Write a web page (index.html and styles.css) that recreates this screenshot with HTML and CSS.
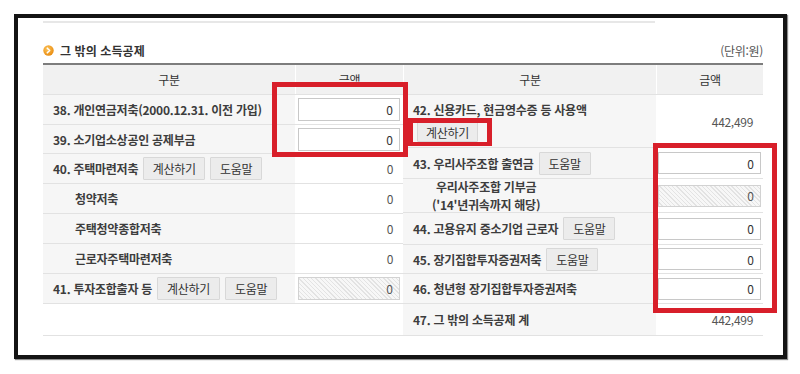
FILE: index.html
```html
<!DOCTYPE html>
<html lang="ko">
<head>
<meta charset="utf-8">
<title>그 밖의 소득공제</title>
<link rel="stylesheet" href="styles.css">
</head>
<body>
<div class="page">
  <div class="frame">
    <div class="prev-line"></div>
    <div class="title-row">
      <h3 class="title">
        <svg class="bullet" width="11" height="11" viewBox="0 0 11 11" aria-hidden="true">
          <defs>
            <radialGradient id="bg" cx="40%" cy="35%" r="70%">
              <stop offset="0" stop-color="#fcc45a"/>
              <stop offset="1" stop-color="#e8890c"/>
            </radialGradient>
          </defs>
          <circle cx="5.5" cy="5.5" r="5.2" fill="url(#bg)"/>
          <path d="M4.3 3.2 L6.6 5.5 L4.3 7.8" fill="none" stroke="#fff" stroke-width="1.6" stroke-linecap="round" stroke-linejoin="round"/>
        </svg>
        <span>그 밖의 소득공제</span>
      </h3>
      <span class="unit">(단위:원)</span>
    </div>

    <div class="tables">
      <div class="tbl tbl-left">
        <div class="row head h30">
          <div class="c lbl">구분</div>
          <div class="c amt">금액</div>
        </div>
        <div class="row h30">
          <div class="c lbl"><span>38. 개인연금저축(2000.12.31. 이전 가입)</span></div>
          <div class="c amt in"><input class="inp" type="text" value="0"></div>
        </div>
        <div class="row h29">
          <div class="c lbl"><span>39. 소기업소상공인 공제부금</span></div>
          <div class="c amt in"><input class="inp" type="text" value="0"></div>
        </div>
        <div class="row h30">
          <div class="c lbl"><span>40. 주택마련저축</span><button class="btn w62">계산하기</button><button class="btn w52">도움말</button></div>
          <div class="c amt">0</div>
        </div>
        <div class="row h30">
          <div class="c lbl sub"><span>청약저축</span></div>
          <div class="c amt">0</div>
        </div>
        <div class="row h30">
          <div class="c lbl sub"><span>주택청약종합저축</span></div>
          <div class="c amt">0</div>
        </div>
        <div class="row h30">
          <div class="c lbl sub"><span>근로자주택마련저축</span></div>
          <div class="c amt">0</div>
        </div>
        <div class="row h30">
          <div class="c lbl"><span>41. 투자조합출자 등</span><button class="btn w63">계산하기</button><button class="btn w52">도움말</button></div>
          <div class="c amt in"><input class="inp dis" type="text" value="0" disabled></div>
        </div>
      </div>

      <div class="tbl tbl-right">
        <div class="row head h30">
          <div class="c lbl">구분</div>
          <div class="c amt">금액</div>
        </div>
        <div class="row h53">
          <div class="c lbl stack"><span>42. 신용카드, 현금영수증 등 사용액</span><button class="btn small">계산하기</button></div>
          <div class="c amt">442,499</div>
        </div>
        <div class="row h31">
          <div class="c lbl"><span>43. 우리사주조합 출연금</span><button class="btn w52">도움말</button></div>
          <div class="c amt in"><input class="inp" type="text" value="0"></div>
        </div>
        <div class="row h34">
          <div class="c lbl sub2"><span class="two">우리사주조합 기부금<br>('14'년귀속까지 해당)</span></div>
          <div class="c amt in"><input class="inp dis" type="text" value="0" disabled></div>
        </div>
        <div class="row h32">
          <div class="c lbl"><span>44. 고용유지 중소기업 근로자</span><button class="btn w52">도움말</button></div>
          <div class="c amt in"><input class="inp" type="text" value="0"></div>
        </div>
        <div class="row h29">
          <div class="c lbl"><span>45. 장기집합투자증권저축</span><button class="btn w52">도움말</button></div>
          <div class="c amt in"><input class="inp" type="text" value="0"></div>
        </div>
        <div class="row h30">
          <div class="c lbl"><span>46. 청년형 장기집합투자증권저축</span></div>
          <div class="c amt in"><input class="inp" type="text" value="0"></div>
        </div>
        <div class="row h31 last">
          <div class="c lbl"><span>47. 그 밖의 소득공제 계</span></div>
          <div class="c amt">442,499</div>
        </div>
      </div>
    </div>
  </div>

  <div class="mark mark1"></div>
  <div class="mark mark2"></div>
  <div class="mark mark3"></div>
</div>
</body>
</html>
```

FILE: styles.css
```css
html, body {
  margin: 0;
  padding: 0;
  background: #ffffff;
}

body {
  font-family: "Noto Sans CJK KR", "Noto Sans", sans-serif;
  font-size: 12px;
  color: #333333;
}

.page {
  position: relative;
  width: 800px;
  height: 374px;
  box-sizing: border-box;
  padding: 14px 0 0 14px;
}

.frame {
  width: 773px;
  height: 345px;
  box-sizing: border-box;
  border: 4px solid #141414;
  padding: 0 20px 0 25px;
  box-shadow: 1px 1px 1px rgba(0, 0, 0, 0.45);
  background: #ffffff;
}

.prev-line {
  margin-top: 3px;
  width: 612px;
  height: 2px;
  background: #e7e7e7;
}

.title-row {
  display: flex;
  justify-content: space-between;
  align-items: center;
  height: 18px;
  margin-top: 18px;
  margin-bottom: 4px;
}

.title {
  margin: 0;
  font-size: 12px;
  font-weight: bold;
  color: #333333;
  display: flex;
  align-items: center;
  gap: 6px;
  letter-spacing: 0.1px;
}

.bullet {
  display: block;
}

.unit {
  color: #555555;
  letter-spacing: -0.3px;
}

.tables {
  display: flex;
  border-bottom: 1px solid #e2e2e2;
}

.tbl {
  border-top: 2px solid #7d7d7d;
}

.row {
  display: flex;
  box-sizing: border-box;
  border-bottom: 1px solid #e2e2e2;
}

.row.last {
  border-bottom: none;
}

.h29 { height: 29px; }
.h30 { height: 30px; }
.h31 { height: 31px; }
.h32 { height: 32px; }
.h34 { height: 34px; }
.h53 { height: 53px; }

.c {
  box-sizing: border-box;
  display: flex;
  align-items: center;
}

.tbl-left .lbl { width: 252px; }
.tbl-left .amt { width: 108px; }
.tbl-right .lbl { width: 253px; }
.tbl-right .amt { width: 107px; }

.lbl {
  background: #f6f6f6;
  padding-left: 10px;
  gap: 5px;
  font-weight: bold;
  color: #3d3d3d;
  letter-spacing: -0.25px;
  white-space: nowrap;
}

.lbl.sub {
  padding-left: 32px;
}

.lbl.sub2 {
  padding-left: 29px;
}

.two {
  display: inline-block;
  text-align: center;
  line-height: 18px;
}

.lbl.stack {
  flex-direction: column;
  align-items: flex-start;
  justify-content: flex-start;
  padding-top: 6px;
  gap: 4px;
}

.amt {
  justify-content: flex-end;
  padding-right: 10px;
  background: #ffffff;
  color: #555555;
  letter-spacing: -0.3px;
}

.amt.in {
  justify-content: center;
  padding-right: 0;
}

.head .c {
  background: #f1f1f1;
  justify-content: center;
  padding: 0;
  font-weight: normal;
  color: #333333;
}

.head .amt {
  border-left: 1px solid #ffffff;
}

.tbl-right .head .lbl {
  border-left: 1px solid #ffffff;
}

.inp {
  box-sizing: border-box;
  width: 102px;
  height: 23px;
  margin: 0;
  border: 1px solid #c8c8c8;
  background: #ffffff;
  padding: 0 6px 0 4px;
  text-align: right;
  font-family: "Noto Sans CJK KR", "Noto Sans", sans-serif;
  font-size: 12px;
  color: #333333;
  outline: none;
}

.tbl-right .inp {
  width: 103px;
  height: 22px;
}

.inp.dis {
  color: #555555;
  border-color: #d2d2d2;
  background: repeating-linear-gradient(45deg, #f7f7f7 0px, #f7f7f7 2px, #e3e3e3 2px, #e3e3e3 3px);
}

.btn {
  box-sizing: border-box;
  height: 23px;
  margin: 0;
  padding: 0;
  border: 1px solid #d8d8d8;
  border-radius: 1px;
  background: #ececec;
  font-family: "Noto Sans CJK KR", "Noto Sans", sans-serif;
  font-size: 12px;
  font-weight: normal;
  color: #333333;
  letter-spacing: -0.3px;
}

.w62 { width: 62px; }
.w63 { width: 63px; }
.w52 { width: 52px; }

.btn.small {
  width: 61px;
  height: 20px;
  margin-left: 4px;
}

.mark {
  position: absolute;
  box-sizing: border-box;
  border: 5px solid #d81f2a;
}

.mark1 {
  left: 272px;
  top: 82px;
  width: 136px;
  height: 75px;
}

.mark2 {
  left: 408px;
  top: 118px;
  width: 84px;
  height: 28px;
  border-width: 5px 5px 4px 5px;
}

.mark3 {
  left: 653px;
  top: 143px;
  width: 124px;
  height: 170px;
}
```
